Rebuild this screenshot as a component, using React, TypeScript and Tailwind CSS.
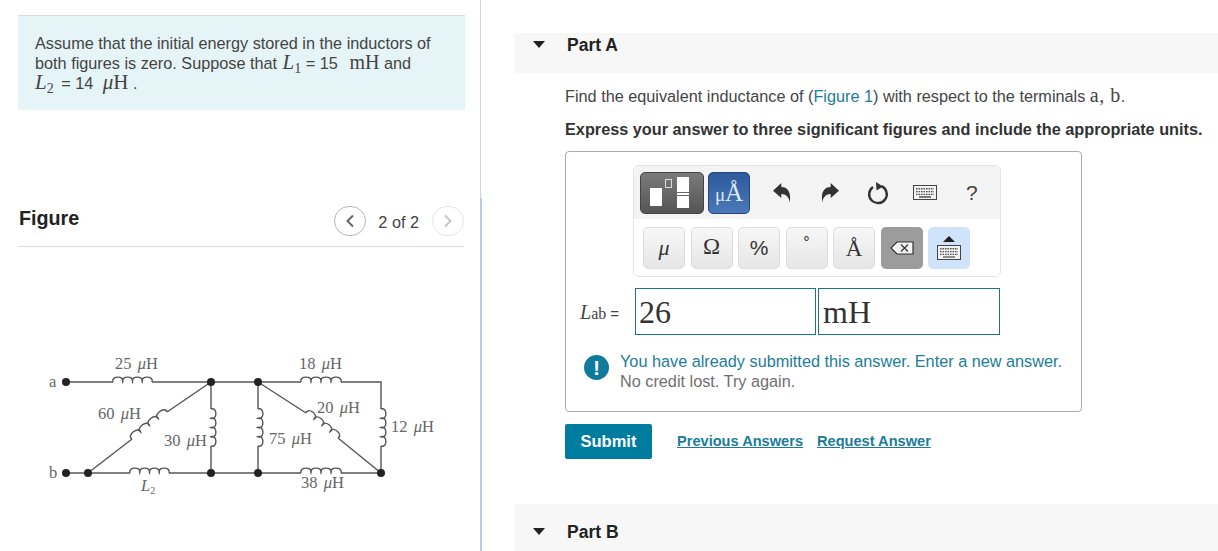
import React from 'react'

const sans = "font-['Liberation_Sans',Arial,sans-serif]"
const serif = "font-['Liberation_Serif','Times_New_Roman',serif]"

// coil between two points, humps on the side given by sign
const coil = (x1: number, y1: number, x2: number, y2: number, n: number, sign = 1) => {
  const step = 1 / n
  const dx = x2 - x1
  const dy = y2 - y1
  const len = Math.hypot(dx, dy)
  const nx = (dy / len) * sign
  const ny = (-dx / len) * sign
  const h = 6.5
  let d = `M${x1} ${y1}`
  for (let i = 0; i < n; i++) {
    const a = i * step
    const b = (i + 1) * step
    const ox = (step * dx) / 4
    const oy = (step * dy) / 4
    const sx = x1 + dx * a
    const sy = y1 + dy * a
    const ex = x1 + dx * b
    const ey = y1 + dy * b
    d += ` C${sx + nx * h - ox} ${sy + ny * h - oy} ${ex + nx * h + ox} ${ey + ny * h + oy} ${ex} ${ey}`
  }
  return d
}

const Circuit = () => {
  const wires = [
    'M66 381H113',
    'M152 381H301',
    'M341 381H381V408',
    'M381 445V472',
    'M66 472H130',
    'M169 472H301',
    'M341 472H381',
    'M88 472L132 438',
    'M167 411L211 381',
    'M211 381V408',
    'M211 445V472',
    'M258 381V408',
    'M258 445V472',
    'M258 381L306 412',
    'M338 437L381 472',
  ]
  const coils = [
    coil(113, 381, 152, 381, 4),
    coil(301, 381, 341, 381, 4),
    coil(130, 472, 169, 472, 4),
    coil(301, 472, 341, 472, 4),
    coil(132, 438, 167, 411, 4),
    coil(211, 408, 211, 445, 4),
    coil(258, 408, 258, 445, 4),
    coil(381, 408, 381, 445, 4),
    coil(306, 412, 338, 437, 4),
  ]
  const dots = [
    [66, 381],
    [211, 381],
    [258, 381],
    [66, 472],
    [88, 472],
    [211, 472],
    [258, 472],
    [381, 472],
  ]
  const labels: [number, number, string][] = [
    [115, 368, '25'],
    [299, 368, '18'],
    [98, 418, '60'],
    [317, 412, '20'],
    [391, 431, '12'],
    [164, 445, '30'],
    [269, 443, '75'],
    [301, 487, '38'],
  ]
  return (
    <svg width="420" height="160" viewBox="30 340 420 160" className={`ml-3 mt-[94px] ${serif}`}>
      <g fill="none" stroke="#555" strokeWidth="1.4">
        {wires.map(d => (
          <path key={d} d={d} />
        ))}
        {coils.map(d => (
          <path key={d} d={d} />
        ))}
      </g>
      {dots.map(([x, y]) => (
        <circle key={`${x}-${y}`} cx={x} cy={y} r="4" fill="#222" />
      ))}
      <g fill="#666" fontSize="16.5">
        {labels.map(([x, y, t]) => (
          <text key={t} x={x} y={y}>
            {t} <tspan dx="2" fontStyle="italic">μ</tspan>H
          </text>
        ))}
        <text x="49" y="386">a</text>
        <text x="49" y="477">b</text>
        <text x="141" y="490" fontStyle="italic">
          L<tspan fontSize="10" dy="3" fontStyle="normal">2</tspan>
        </text>
      </g>
    </svg>
  )
}

const NavButton = ({ dir, faded }: { dir: 'l' | 'r'; faded?: boolean }) => (
  <button
    className={`flex h-[30px] w-[32px] items-center justify-center rounded-full border bg-white ${
      faded ? 'border-[#e4e4e4]' : 'border-[#b5b5b5]'
    }`}
  >
    <svg width="12" height="14" viewBox="0 0 12 14" fill="none" stroke={faded ? '#c4c4c4' : '#666'} strokeWidth="2">
      <path d={dir === 'l' ? 'M9 1.5L3.5 7L9 12.5' : 'M3 1.5L8.5 7L3 12.5'} />
    </svg>
  </button>
)

const Keyboard = () => (
  <svg width="24" height="15" viewBox="0 0 24 15">
    <rect x="0.5" y="0.5" width="23" height="14" fill="#f2f2f2" stroke="#444" />
    <path d="M3 3.8H21M3 6.6H21M3 9.4H21" stroke="#555" strokeWidth="1.4" strokeDasharray="1.6 0.9" />
    <path d="M6 12H18" stroke="#555" strokeWidth="1.3" />
  </svg>
)

const PaletteButton = ({ children, className }: { children: React.ReactNode; className?: string }) => (
  <button
    className={`flex h-[42px] w-[42px] justify-center rounded-[5px] border border-[#dcdcdc] bg-gradient-to-b from-[#f7f7f7] to-[#e6e6e6] text-[#333] ${className ?? 'items-center'}`}
  >
    {children}
  </button>
)

const PartHeader = ({ title, className }: { title: string; className: string }) => (
  <div className={`flex bg-[#f7f7f7] pl-[18px] ${className}`}>
    <span className="mt-[6px] h-0 w-0 border-x-[6.5px] border-t-[7px] border-x-transparent border-t-[#222]" />
    <h2 className={`ml-[22px] text-[17.5px] leading-5 font-bold text-[#222] ${sans}`}>{title}</h2>
  </div>
)

const Toolbar = () => (
  <div className="ml-[67px] w-[368px] overflow-hidden rounded-[6px] border border-[#e3e3e3]">
    <div className="flex h-[53px] items-center bg-[#f4f4f4] pl-[6px]">
      <button className="relative h-[42px] w-[64px] rounded-[5px] border border-[#444] bg-gradient-to-b from-[#7b7b7b] to-[#555]">
        <span className="absolute top-[15px] left-[9px] h-[18px] w-[12px] bg-white" />
        <span className="absolute top-[6px] left-[24px] h-[9px] w-[7px] border border-[#ddd]" />
        <span className="absolute top-[4px] left-[36px] h-[15px] w-[12px] bg-white" />
        <span className="absolute top-[20px] left-[36px] h-[2px] w-[12px] bg-white" />
        <span className="absolute top-[23px] left-[36px] h-[12px] w-[12px] bg-white" />
      </button>
      <button
        className={`ml-[4px] h-[42px] w-[42px] rounded-[5px] border border-[#24467c] bg-gradient-to-b from-[#2d5a9c] to-[#4b78b8] leading-[40px] text-[#dbe8f8] ${serif}`}
      >
        <span className="text-[19px]">μ</span>
        <span className="text-[25px]">Å</span>
      </button>
      <svg width="18" height="20" viewBox="0 0 18 20" className="ml-[23px]" fill="#333">
        <path d="M0 7.7L8.3 0V4C14 4 18.5 8 16.7 19.5C16 14 13 11 8.3 11V15Z" />
      </svg>
      <svg width="18" height="20" viewBox="0 0 18 20" className="ml-[30px]" fill="#333">
        <path d="M18 7.7L9.7 0V4C4 4 -0.5 8 1.3 19.5C2 14 5 11 9.7 11V15Z" />
      </svg>
      <svg width="22" height="24" viewBox="0 0 22 24" className="ml-[28px]" fill="none">
        <path d="M14.5 5.2A8.8 8.8 0 1 1 6 6" stroke="#333" strokeWidth="2.4" />
        <path d="M9 1L16 5.5L9.5 9.5Z" fill="#333" />
      </svg>
      <span className="ml-[24px] flex">
        <Keyboard />
      </span>
      <span className={`ml-[29px] text-[21px] text-[#444] ${sans}`}>?</span>
    </div>
    <div className="flex h-[57px] items-center gap-[5.5px] bg-white pl-[9px]">
      <PaletteButton>
        <span className={`text-[22px] italic ${serif}`}>μ</span>
      </PaletteButton>
      <PaletteButton>
        <span className={`text-[23px] ${serif}`}>Ω</span>
      </PaletteButton>
      <PaletteButton>
        <span className={`text-[21px] ${sans}`}>%</span>
      </PaletteButton>
      <PaletteButton className="items-start">
        <span className={`mt-[3px] text-[16px] ${sans}`}>°</span>
      </PaletteButton>
      <PaletteButton>
        <span className={`mt-[3px] text-[23px] ${serif}`}>Å</span>
      </PaletteButton>
      <button className="flex h-[42px] w-[42px] items-center justify-center rounded-[5px] bg-[#9c9c9c]">
        <svg width="24" height="14" viewBox="0 0 24 14" fill="#f4f4f4" stroke="#333" strokeWidth="1.2">
          <path d="M7 1H23V13H7L1 7Z" />
          <path d="M11 3.5L18 10.5M18 3.5L11 10.5" />
        </svg>
      </button>
      <button className="flex h-[42px] w-[42px] flex-col items-center justify-center gap-[3px] rounded-[5px] bg-[#cfe4fb]">
        <span className="h-0 w-0 border-x-[6px] border-b-[6px] border-x-transparent border-b-[#222]" />
        <Keyboard />
      </button>
    </div>
  </div>
)

export default function App() {
  return (
    <div className={`flex h-[551px] w-[1218px] overflow-hidden bg-white text-[16.25px] ${sans}`}>
      {/* left: statement and figure */}
      <div className="w-[480px] shrink-0 pt-[15px] pl-[18px]">
        <div className="h-[95px] w-[447px] border-t border-[#dcdcdc] bg-[#e5f4f6] pt-[17px] pl-[17px] leading-5 text-[#444]">
          <p>Assume that the initial energy stored in the inductors of</p>
          <p>
            both figures is zero. Suppose that{' '}
            <span className={`ml-[1px] text-[21px] leading-4 ${serif}`}>
              <i>L</i>
              <sub className="text-[14px]">1</sub>
            </span>{' '}
            = 15{' '}
            <span className={`ml-[7px] text-[20px] leading-4 ${serif}`}>mH</span> and
          </p>
          <p>
            <span className={`text-[21px] leading-4 ${serif}`}>
              <i>L</i>
              <sub className="mr-[3px] text-[14px]">2</sub>
            </span>{' '}
            = 14{' '}
            <span className={`ml-[5px] text-[21px] leading-4 ${serif}`}>
              <i>μ</i>H
            </span>{' '}
            .
          </p>
        </div>
        <div className="mt-[95px] flex h-[42px] w-[446px] items-start justify-between border-b border-[#dddddd]">
          <h2 className="-mt-px ml-px text-[19.7px] leading-7 font-bold text-[#222]">Figure</h2>
          <div className="mt-px flex items-center">
            <NavButton dir="l" />
            <span className="mt-0.5 mr-[13px] ml-[12px] text-[#444]">2 of 2</span>
            <NavButton dir="r" faded />
          </div>
        </div>
        <Circuit />
      </div>

      {/* splitter */}
      <div className="flex w-[2px] shrink-0 flex-col">
        <div className="h-[198px] w-px bg-[#c8d6e2]" />
        <div className="flex-1 bg-[#bccddd]" />
      </div>

      {/* right: parts */}
      <div className="flex-1 pt-[33px] pl-[33px]">
        <PartHeader title="Part A" className="h-[40px] pt-[2px]" />
        <div className="pl-[50px]">
          <p className="mt-[12px] leading-5 text-[#444]">
            Find the equivalent inductance of (<span className="text-[#1b7c99]">Figure 1</span>) with respect to the
            terminals <span className={`text-[20px] tracking-[0.5px] ${serif}`}>a, b</span>.
          </p>
          <p className="mt-[13px] leading-5 font-bold text-[#333]">
            Express your answer to three significant figures and include the appropriate units.
          </p>
          <div className="mt-[12px] h-[261px] w-[517px] rounded-[4px] border border-[#aaaaaa] pt-[13px]">
            <Toolbar />
            <div className="mt-[11px] ml-[14px] flex items-center">
              <span className={`w-[42px] whitespace-nowrap text-[#444] ${serif}`}>
                <i className="text-[20px]">L</i>
                <span className="text-[16px]">ab</span> <span className={`text-[15px] ${sans}`}>=</span>
              </span>
              <div
                className={`ml-[13px] h-[47px] w-[181px] border border-[#1b7488] pl-[3px] text-[32px] leading-[47px] text-[#333] ${serif}`}
              >
                26
              </div>
              <div
                className={`ml-[2px] h-[47px] w-[182px] border border-[#1b7488] pl-[4px] text-[32px] leading-[47px] text-[#333] ${serif}`}
              >
                mH
              </div>
            </div>
            <div className="mt-[16px] ml-[18px] flex">
              <span className="mt-[4px] flex h-[25px] w-[25px] items-center justify-center rounded-full bg-[#0f7a9c] text-[20px] font-bold text-white">
                !
              </span>
              <div className="ml-[11px] leading-5">
                <p className="text-[#1c7d99]">You have already submitted this answer. Enter a new answer.</p>
                <p className="text-[#6f6f6f]">No credit lost. Try again.</p>
              </div>
            </div>
          </div>
          <div className="mt-[12px] flex items-center">
            <button className="h-[35px] w-[87px] rounded-[2px] bg-[#007c9e] text-[16.5px] font-bold text-white">
              Submit
            </button>
            <a className="ml-[25px] text-[14.6px] font-bold text-[#1b7c99] underline">Previous Answers</a>
            <a className="ml-[14px] text-[14.6px] font-bold text-[#1b7c99] underline">Request Answer</a>
          </div>
        </div>
        <PartHeader title="Part B" className="mt-[45px] h-[47px] pt-[18px]" />
      </div>
    </div>
  )
}
